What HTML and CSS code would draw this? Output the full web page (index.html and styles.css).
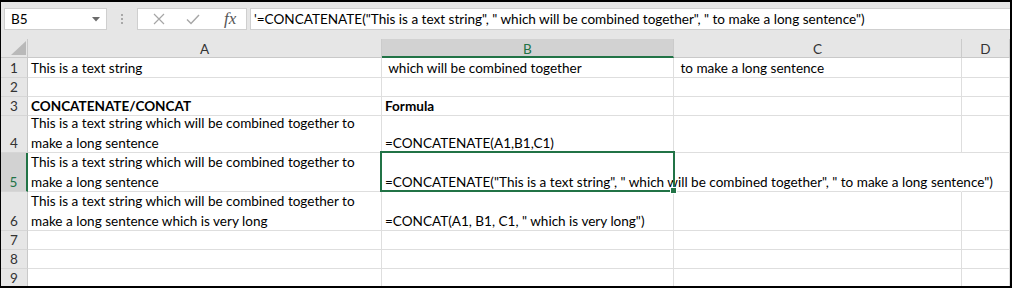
FILE: index.html
```html
<!DOCTYPE html>
<html>
<head>
<meta charset="utf-8">
<link rel="stylesheet" href="styles.css">
</head>
<body>
<div class="frame">
  <div class="fbar">
    <div class="namebox">
      <span class="ref">B5</span>
      <svg class="arrow" width="8" height="5" viewBox="0 0 8 5"><path d="M0 0H8L4 4.5Z" fill="#6b6b6b"/></svg>
    </div>
    <div class="dots"><i></i><i></i><i></i></div>
    <div class="fxbox">
      <svg class="ico" width="14" height="14" viewBox="0 0 14 14"><path d="M2 2L12 12M12 2L2 12" stroke="#a6a6a6" stroke-width="1.2" fill="none"/></svg>
      <svg class="ico" width="16" height="14" viewBox="0 0 16 14"><path d="M2 7.5L6 11.5L14 3" stroke="#a6a6a6" stroke-width="1.4" fill="none"/></svg>
      <span class="fx">fx</span>
    </div>
    <div class="finput">'=CONCATENATE("This is a text string", " which will be combined together", " to make a long sentence")</div>
  </div>
  <div class="sheet">
    <div class="grid">
      <div class="corner"><svg width="15" height="14" viewBox="0 0 15 14"><path d="M15 0V14H0Z" fill="#b9b9b9"/></svg></div>
      <div class="ch">A</div>
      <div class="ch sel">B</div>
      <div class="ch">C</div>
      <div class="ch">D</div>

      <div class="rh"><span class="t">1</span></div>
      <div class="c"><span class="t">This is a text string</span></div>
      <div class="c"><span class="t"> which will be combined together</span></div>
      <div class="c"><span class="t"> to make a long sentence</span></div>
      <div class="c"></div>

      <div class="rh"><span class="t">2</span></div>
      <div class="c"></div><div class="c"></div><div class="c"></div><div class="c"></div>

      <div class="rh"><span class="t">3</span></div>
      <div class="c b"><span class="t">CONCATENATE/CONCAT</span></div>
      <div class="c b"><span class="t">Formula</span></div>
      <div class="c"></div><div class="c"></div>

      <div class="rh"><span class="t">4</span></div>
      <div class="c wrap"><span class="t">This is a text string which will be combined together to make a long sentence</span></div>
      <div class="c"><span class="t">=CONCATENATE(A1,B1,C1)</span></div>
      <div class="c"></div><div class="c"></div>

      <div class="rh sel"><span class="t">5</span></div>
      <div class="c wrap"><span class="t">This is a text string which will be combined together to make a long sentence</span></div>
      <div class="c over"><span class="t">=CONCATENATE("This is a text string", " which will be combined together", " to make a long sentence")</span><div class="selbox"><span class="handle"></span></div></div>
      <div class="c nor"></div><div class="c"></div>

      <div class="rh"><span class="t">6</span></div>
      <div class="c wrap"><span class="t">This is a text string which will be combined together to make a long sentence which is very long</span></div>
      <div class="c"><span class="t">=CONCAT(A1, B1, C1, " which is very long")</span></div>
      <div class="c"></div><div class="c"></div>

      <div class="rh"><span class="t">7</span></div>
      <div class="c"></div><div class="c"></div><div class="c"></div><div class="c"></div>
      <div class="rh"><span class="t">8</span></div>
      <div class="c"></div><div class="c"></div><div class="c"></div><div class="c"></div>
      <div class="rh"><span class="t">9</span></div>
      <div class="c"></div><div class="c"></div><div class="c"></div><div class="c"></div>
    </div>
  </div>
</div>
</body>
</html>
```

FILE: styles.css
```css
html, body {
  margin: 0;
  padding: 0;
}
body {
  width: 1012px;
  height: 288px;
  overflow: hidden;
  font-family: Lato, "Open Sans", sans-serif;
  font-size: 13.55px;
  color: #000;
}
.frame {
  box-sizing: border-box;
  width: 1012px;
  height: 288px;
  border-style: solid;
  border-color: #000;
  border-width: 2px 2px 2px 1px;
  background: #e6e6e6;
  overflow: hidden;
  display: flex;
  flex-direction: column;
}
.fbar {
  display: flex;
  align-items: center;
  height: 22px;
  margin-top: 6px;
  padding-left: 3px;
}
.namebox {
  box-sizing: border-box;
  width: 103px;
  height: 22px;
  background: #fff;
  border: 1px solid #cfcfcf;
  display: flex;
  align-items: center;
  justify-content: space-between;
  padding: 0 6px 0 6px;
}
.dots {
  width: 30px;
  display: flex;
  flex-direction: column;
  align-items: center;
  gap: 2px;
}
.dots i {
  display: block;
  width: 2px;
  height: 2px;
  background: #a8a8a8;
}
.fxbox {
  box-sizing: border-box;
  width: 110px;
  height: 22px;
  background: #fff;
  border: 1px solid #cfcfcf;
  display: flex;
  align-items: center;
  padding-left: 14px;
  gap: 19px;
}
.fx {
  font-family: "Liberation Serif", serif;
  font-style: italic;
  font-size: 17px;
  color: #555;
  margin-left: 4px;
}
.finput {
  box-sizing: border-box;
  flex: 1;
  margin-left: 3px;
  height: 22px;
  background: #fff;
  border: 1px solid #cfcfcf;
  border-right: none;
  padding-left: 3px;
  line-height: 20px;
  white-space: nowrap;
}
.sheet {
  margin-top: 9px;
  flex: 1;
  background: #fff;
}
.grid {
  display: grid;
  grid-template-columns: 27px 354px 292px 288px 1fr;
  grid-template-rows: 19px 20px 19px 19px 37px 39px 39px 19px 19px 19px;
}
.corner {
  background: #e6e6e6;
  border-right: 1px solid #c9c9c9;
  border-bottom: 1px solid #c9c9c9;
  display: flex;
  align-items: flex-end;
  justify-content: flex-end;
  padding: 0 1px 2px 0;
  box-sizing: border-box;
}
.ch {
  box-sizing: border-box;
  background: #e6e6e6;
  border-right: 1px solid #cbcbcb;
  border-bottom: 1px solid #c9c9c9;
  text-align: center;
  color: #333;
  line-height: 19px;
  padding-top: 1px;
}
.ch.sel {
  background: #d2d2d2;
  color: #217346;
  border-bottom: 2px solid #217346;
}
.rh {
  box-sizing: border-box;
  background: #e6e6e6;
  border-right: 1px solid #c9c9c9;
  border-bottom: 1px solid #d6d6d6;
  color: #333;
  display: flex;
  align-items: flex-end;
  justify-content: center;
  line-height: 20px;
}
.rh.sel {
  background: #d2d2d2;
  color: #217346;
  border-right: 2px solid #217346;
}
.t {
  position: relative;
  top: 1px;
}
.c {
  box-sizing: border-box;
  border-right: 1px solid #dedede;
  border-bottom: 1px solid #dedede;
  padding-left: 3px;
  white-space: pre;
  display: flex;
  align-items: flex-end;
  line-height: 20px;
  position: relative;
}
.c.b {
  font-weight: bold;
}
.c.wrap {
  white-space: normal;
  padding-right: 2px;
  overflow: hidden;
}
.c.over {
  overflow: visible;
  z-index: 2;
  border-right-color: transparent;
}
.c.nor {
  border-right-color: transparent;
}
.selbox {
  position: absolute;
  left: -2px;
  top: -2px;
  right: -2px;
  bottom: -1px;
  border: 2px solid #217346;
}
.handle {
  position: absolute;
  right: -4px;
  bottom: -4px;
  width: 5px;
  height: 5px;
  background: #217346;
  border: 1px solid #fff;
}
```
